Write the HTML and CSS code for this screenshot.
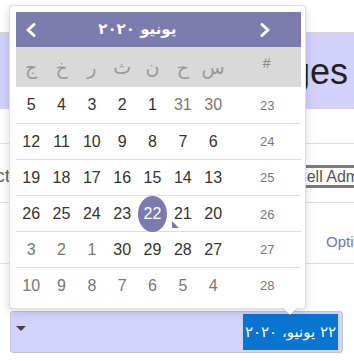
FILE: index.html
```html
<!DOCTYPE html>
<html lang="en">
<head>
<meta charset="utf-8">
<link rel="stylesheet" href="styles.css">
</head>
<body>
<div class="page">
  <div class="top-gap"></div>
  <div class="title-band"><span class="title">Messages</span></div>
  <div class="row row-a"></div>
  <div class="row row-b"><span class="label">Product</span><span class="tag">Sell Admin</span></div>
  <div class="row row-c"><span class="link">Options</span></div>
  <div class="field-wrap">
    <div class="field"><span class="caret"></span><span class="value" dir="rtl">۲۲ یونیو، ۲۰۲۰</span></div>
  </div>
</div>

<div class="picker" dir="rtl">
  <div class="cal-row header">
    <div class="nav"><svg width="10" height="14" viewBox="0 0 10 14"><polyline points="2,1.5 8,7 2,12.5" fill="none" stroke="#fff" stroke-width="3" stroke-linecap="round" stroke-linejoin="round"/></svg></div>
    <div class="switch">یونیو ۲۰۲۰</div>
    <div class="nav"><svg width="10" height="14" viewBox="0 0 10 14"><polyline points="8,1.5 2,7 8,12.5" fill="none" stroke="#fff" stroke-width="3" stroke-linecap="round" stroke-linejoin="round"/></svg></div>
  </div>
  <div class="cal-row dows">
    <div class="wk-h">#</div>
    <div>س</div><div>ح</div><div>ن</div><div>ث</div><div>ر</div><div>خ</div><div>ج</div>
  </div>
  <div class="cal-row week">
    <div class="wk">23</div>
    <div class="day old">30</div><div class="day old">31</div><div class="day">1</div><div class="day">2</div><div class="day">3</div><div class="day">4</div><div class="day">5</div>
  </div>
  <div class="cal-row week">
    <div class="wk">24</div>
    <div class="day">6</div><div class="day">7</div><div class="day">8</div><div class="day">9</div><div class="day">10</div><div class="day">11</div><div class="day">12</div>
  </div>
  <div class="cal-row week">
    <div class="wk">25</div>
    <div class="day">13</div><div class="day">14</div><div class="day">15</div><div class="day">16</div><div class="day">17</div><div class="day">18</div><div class="day">19</div>
  </div>
  <div class="cal-row week">
    <div class="wk">26</div>
    <div class="day">20</div><div class="day today">21</div><div class="day active"><span class="dot">22</span></div><div class="day">23</div><div class="day">24</div><div class="day">25</div><div class="day">26</div>
  </div>
  <div class="cal-row week">
    <div class="wk">27</div>
    <div class="day">27</div><div class="day">28</div><div class="day">29</div><div class="day">30</div><div class="day old">1</div><div class="day old">2</div><div class="day old">3</div>
  </div>
  <div class="cal-row week">
    <div class="wk">28</div>
    <div class="day old">4</div><div class="day old">5</div><div class="day old">6</div><div class="day old">7</div><div class="day old">8</div><div class="day old">9</div><div class="day old">10</div>
  </div>
</div>
</body>
</html>
```

FILE: styles.css
```css
html, body {
  margin: 0;
  padding: 0;
}

body {
  width: 354px;
  height: 361px;
  overflow: hidden;
  position: relative;
  background: #fff;
  font-family: "Liberation Sans", "DejaVu Sans", sans-serif;
  color: #333;
}

.page {
  display: flex;
  flex-direction: column;
}

.top-gap {
  height: 32px;
  border-bottom: 1px solid #d4d4d4;
}

.title-band {
  height: 76px;
  background: #d1d1fb;
  display: flex;
  justify-content: flex-end;
  align-items: center;
  padding-right: 6px;
}

.title {
  font-size: 36px;
  color: #222;
  line-height: 1;
  padding-top: 2px;
}

.row {
  border-bottom: 1px solid #dedede;
  display: flex;
  align-items: center;
  white-space: nowrap;
}

.row-a { height: 34px; }

.row-b {
  height: 59px;
  padding-top: 6px;
  box-sizing: border-box;
}

.label {
  width: 10px;
  direction: rtl;
  overflow: visible;
  font-size: 19px;
  color: #666;
  text-align: right;
}

.tag {
  margin-left: 286px;
  font-size: 16px;
  color: #555;
  border-top: 3px solid #7a7a7a;
  border-bottom: 3px solid #7a7a7a;
  line-height: 17px;
}

.row-c {
  height: 61px;
  padding-left: 326px;
  padding-top: 16px;
  box-sizing: border-box;
}

.link {
  font-size: 15px;
  color: #7272bd;
}

.field-wrap {
  padding: 47px 0 0 10px;
}

.field {
  width: 333px;
  height: 42px;
  box-sizing: border-box;
  background: #d2d2fc;
  border: 1px solid #c4c4d8;
  border-radius: 3px;
  display: flex;
  align-items: center;
  justify-content: space-between;
  padding: 0 4px 0 5px;
}

.caret {
  width: 0;
  height: 0;
  border-left: 5px solid transparent;
  border-right: 5px solid transparent;
  border-top: 5px solid #444;
  align-self: flex-start;
  margin-top: 14px;
}

.value {
  background: #0a74d1;
  color: #fff;
  font-size: 15px;
  height: 36px;
  line-height: 36px;
  padding: 0 2px;
  font-family: "DejaVu Sans", "Liberation Sans", sans-serif;
}

/* date picker popup */
.picker {
  position: absolute;
  left: 9px;
  top: 5px;
  width: 297px;
  box-sizing: border-box;
  padding: 6px 4px 5px 6px;
  background: #fff;
  border: 1px solid rgba(0, 0, 0, 0.13);
  border-radius: 4px;
  box-shadow: 0 3px 10px rgba(0, 0, 0, 0.15);
}

.picker::before {
  content: "";
  position: absolute;
  bottom: -8px;
  left: 272px;
  border-left: 8px solid transparent;
  border-right: 8px solid transparent;
  border-top: 8px solid rgba(0, 0, 0, 0.15);
}

.picker::after {
  content: "";
  position: absolute;
  bottom: -7px;
  left: 273px;
  border-left: 7px solid transparent;
  border-right: 7px solid transparent;
  border-top: 7px solid #fff;
}

.cal-row {
  display: grid;
  grid-template-columns: 72.7px repeat(7, 30.33px);
  align-items: center;
  justify-items: center;
}

.header {
  height: 35px;
  background: #7c7bad;
  color: #fff;
}

.header .switch {
  grid-column: span 6;
  font-family: "DejaVu Sans", sans-serif;
  font-weight: bold;
  font-size: 15px;
  padding-bottom: 2px;
}

.nav {
  display: flex;
  align-items: center;
  justify-content: center;
  height: 100%;
  width: 100%;
}

.dows {
  height: 40px;
  background: #d9d9d9;
  color: #999;
  font-family: "DejaVu Sans", sans-serif;
  font-size: 19px;
}

.dows .wk-h {
  font-family: "Liberation Sans", sans-serif;
  font-size: 14px;
  color: #888;
  padding-left: 4px;
  padding-bottom: 8px;
}

.week {
  height: 36px;
  box-sizing: border-box;
  border-top: 1px solid #dcdce3;
  font-size: 16px;
}

.dows + .week {
  border-top: none;
}

.wk {
  font-size: 13px;
  color: #777;
  padding-left: 5px;
}

.day {
  position: relative;
  width: 100%;
  height: 100%;
  display: flex;
  align-items: center;
  justify-content: center;
  color: #333;
}

.day.old {
  color: #777;
}

.day.active .dot {
  width: 29px;
  height: 36px;
  border-radius: 50%;
  background: #7c7bad;
  color: #fff;
  display: flex;
  align-items: center;
  justify-content: center;
}

.day.today::before {
  content: "";
  position: absolute;
  left: 4px;
  bottom: 4px;
  width: 0;
  height: 0;
  border-bottom: 7px solid #7c7bad;
  border-right: 7px solid transparent;
}
```
